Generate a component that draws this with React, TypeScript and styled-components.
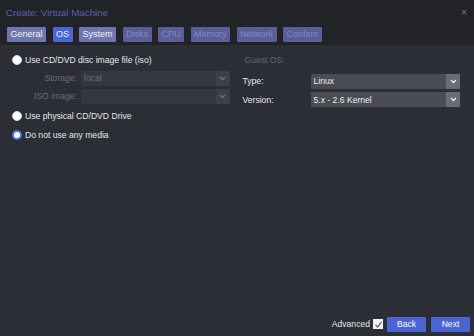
import React from "react";
import styled, { createGlobalStyle } from "styled-components";

const GlobalStyle = createGlobalStyle`
  html, body {
    margin: 0;
    padding: 0;
    background: #2b2e34;
    font-family: "Liberation Sans", Arial, sans-serif;
  }
`;

const tabs = [
  { label: "General", state: "done" },
  { label: "OS", state: "active" },
  { label: "System", state: "done" },
  { label: "Disks", state: "off" },
  { label: "CPU", state: "off" },
  { label: "Memory", state: "off" },
  { label: "Network", state: "off" },
  { label: "Confirm", state: "off" }
];

const Chevron = () => (
  <svg width="7" height="5" viewBox="0 0 7 5">
    <path d="M1 1 L3.5 3.5 L6 1" stroke="currentColor" strokeWidth="1.3" fill="none" />
  </svg>
);

const Select: React.FC<{ value: string; disabled?: boolean }> = ({ value, disabled }) => (
  <StyledSelect disabled={disabled}>
    <span className="value">{value}</span>
    <span className="trigger">
      <Chevron />
    </span>
  </StyledSelect>
);

const Radio: React.FC<{ checked?: boolean; label: string; spaced?: boolean }> = ({
  checked,
  label,
  spaced
}) => (
  <RadioRow spaced={spaced}>
    <RadioDot checked={checked} />
    <span>{label}</span>
  </RadioRow>
);

const App: React.FC = () => {
  return (
    <Window>
      <GlobalStyle />
      <Header>
        <TitleBar>
          <Title>Create: Virtual Machine</Title>
          <Close>×</Close>
        </TitleBar>
        <TabBar>
          {tabs.map(t => (
            <Tab key={t.label} state={t.state}>
              {t.label}
            </Tab>
          ))}
        </TabBar>
      </Header>

      <Body>
        <Column>
          <Radio label="Use CD/DVD disc image file (iso)" />
          <FieldRow>
            <FieldLabel dim>Storage:</FieldLabel>
            <Select value="local" disabled />
          </FieldRow>
          <FieldRow>
            <FieldLabel dim>ISO image:</FieldLabel>
            <Select value="" disabled />
          </FieldRow>
          <Radio label="Use physical CD/DVD Drive" spaced />
          <Radio label="Do not use any media" checked spaced />
        </Column>
        <Column>
          <SectionTitle>Guest OS:</SectionTitle>
          <GuestRow>
            <GuestLabel>Type:</GuestLabel>
            <Select value="Linux" />
          </GuestRow>
          <GuestRow>
            <GuestLabel>Version:</GuestLabel>
            <Select value="5.x - 2.6 Kernel" />
          </GuestRow>
        </Column>
      </Body>

      <Footer>
        <span className="advanced">Advanced</span>
        <CheckBox>
          <svg width="9" height="9" viewBox="0 0 9 9">
            <path d="M1.5 4.8 L3.6 7 L7.6 1.8" stroke="#5a6a8a" strokeWidth="1.3" fill="none" />
          </svg>
        </CheckBox>
        <Button>Back</Button>
        <Button>Next</Button>
      </Footer>
    </Window>
  );
};

const Window = styled.div`
  width: 474px;
  height: 336px;
  display: flex;
  flex-direction: column;
  background: #2b2e34;
  overflow: hidden;
`;

const Header = styled.div`
  height: 45px;
  background: #222327;
  display: flex;
  flex-direction: column;
`;

const TitleBar = styled.div`
  height: 25px;
  display: flex;
  align-items: center;
  justify-content: space-between;
  padding: 0 7px 0 6px;
`;

const Title = styled.div`
  color: #5660b2;
  font-size: 9.8px;
`;

const Close = styled.div`
  color: #7d8086;
  font-size: 10px;
`;

const TabBar = styled.div`
  display: flex;
  gap: 6.5px;
  padding: 2px 0 0 7px;
`;

const Tab = styled.div<{ state: string }>`
  height: 15px;
  line-height: 15px;
  padding: 0 3.5px;
  font-size: 9px;
  border-radius: 1px;
  background: ${p =>
    p.state === "active" ? "#4866d6" : p.state === "done" ? "#6f75ae" : "#585e96"};
  color: ${p => (p.state === "off" ? "#8389c2" : "#f2f2f6")};
`;

const Body = styled.div`
  flex: 1;
  display: grid;
  grid-template-columns: 1fr 1fr;
  column-gap: 13px;
  padding: 7px 14px 0 12px;
  align-items: start;
`;

const Column = styled.div`
  display: flex;
  flex-direction: column;
  gap: 2px;
`;

const RadioRow = styled.div<{ spaced?: boolean }>`
  height: 16px;
  display: flex;
  align-items: center;
  gap: 3px;
  color: #e6e7ea;
  font-size: 8.6px;
  margin-top: ${p => (p.spaced ? "1.5px" : "0")};
`;

const RadioDot = styled.span<{ checked?: boolean }>`
  width: 10px;
  height: 10px;
  border-radius: 50%;
  box-sizing: border-box;
  background: #ffffff;
  border: ${p => (p.checked ? "2px solid #3f7be0" : "1px solid #d8d8d8")};
`;

const FieldRow = styled.div`
  height: 16px;
  display: flex;
  align-items: center;
`;

const FieldLabel = styled.div<{ dim?: boolean }>`
  width: 65px;
  padding-right: 4px;
  text-align: right;
  font-size: 8.6px;
  color: ${p => (p.dim ? "#6c6f76" : "#e6e7ea")};
`;

const StyledSelect = styled.div<{ disabled?: boolean }>`
  flex: 1;
  height: 15px;
  display: flex;
  align-items: stretch;
  background: ${p => (p.disabled ? "#34373d" : "#4a4c53")};
  color: ${p => (p.disabled ? "#6d7077" : "#eeeef0")};
  font-size: 8.6px;

  .value {
    flex: 1;
    display: flex;
    align-items: center;
    padding-left: 3px;
  }

  .trigger {
    width: 14px;
    display: flex;
    align-items: center;
    justify-content: center;
    background: ${p => (p.disabled ? "#3d4046" : "#6a6c73")};
    color: ${p => (p.disabled ? "#70737a" : "#f4f4f6")};
  }
`;

const SectionTitle = styled.div`
  height: 16px;
  line-height: 16px;
  padding-left: 2px;
  color: #62656b;
  font-size: 8.6px;
  margin-bottom: 3px;
`;

const GuestRow = styled.div`
  height: 16px;
  display: flex;
  align-items: center;
  margin-bottom: 0.5px;
`;

const GuestLabel = styled.div`
  width: 68px;
  color: #e6e7ea;
  font-size: 8.6px;
`;

const Footer = styled.div`
  height: 19px;
  display: flex;
  align-items: flex-start;
  justify-content: flex-end;
  padding: 0 4px 0 0;

  .advanced {
    color: #e6e7ea;
    font-size: 8.6px;
    line-height: 15px;
    margin-right: 3px;
  }
`;

const CheckBox = styled.span`
  width: 10px;
  height: 10px;
  margin: 2px 4px 0 0;
  background: #f2f2f2;
  display: flex;
  align-items: center;
  justify-content: center;
`;

const Button = styled.div`
  width: 39px;
  height: 15px;
  line-height: 15px;
  text-align: center;
  background: #4b63d3;
  color: #ffffff;
  font-size: 8.6px;
  border-radius: 1px;
  & + & {
    margin-left: 5px;
  }
`;

export default App;
